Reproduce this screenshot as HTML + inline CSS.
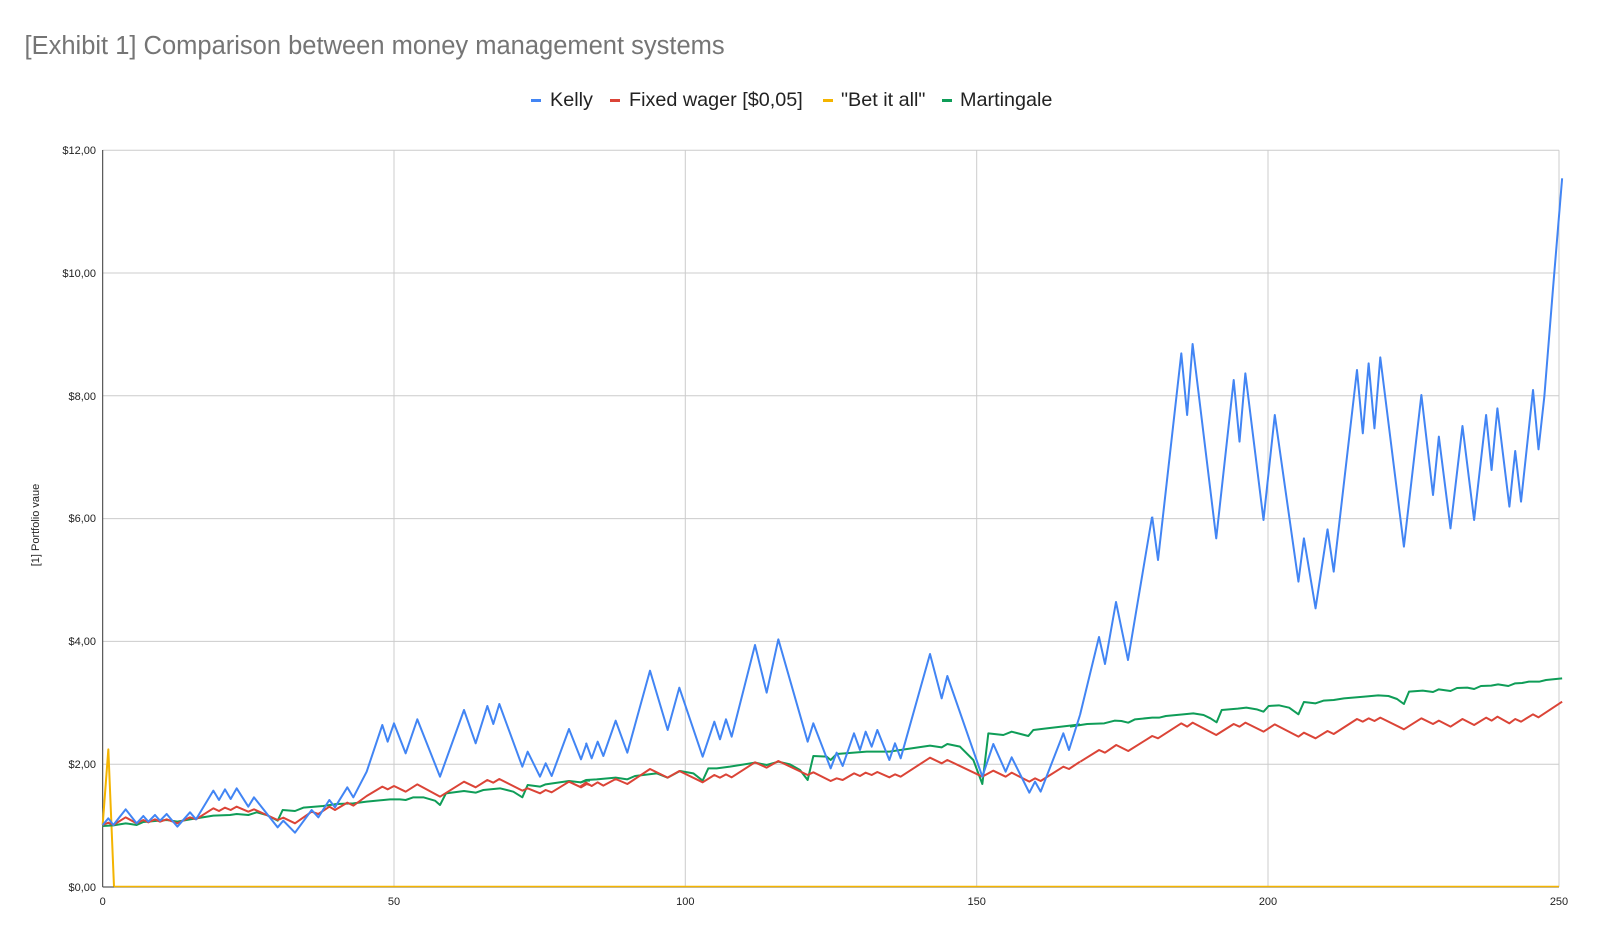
<!DOCTYPE html>
<html><head><meta charset="utf-8"><style>
html,body{margin:0;padding:0;background:#fff;}
svg{display:block;font-family:"Liberation Sans",Arial,sans-serif;}
</style></head><body>
<svg width="1604" height="926" viewBox="0 0 1604 926" xmlns="http://www.w3.org/2000/svg">
<rect width="1604" height="926" fill="#fff"/>
<text x="24.5" y="54" font-size="25.5" fill="#757575">[Exhibit 1] Comparison between money management systems</text>
<g font-size="19.8" fill="#222">
<rect x="531" y="99" width="10" height="3" fill="#4285f4"/><text x="550" y="106">Kelly</text>
<rect x="610" y="99" width="10" height="3" fill="#db4437"/><text x="629" y="106">Fixed wager [$0,05]</text>
<rect x="823" y="99" width="10" height="3" fill="#f4b400"/><text x="841" y="106">"Bet it all"</text>
<rect x="942" y="99" width="10" height="3" fill="#0f9d58"/><text x="960" y="106">Martingale</text>
</g>
<g stroke="#cccccc" stroke-width="1">
<line x1="102.7" y1="764.2" x2="1559" y2="764.2"/><line x1="102.7" y1="641.4" x2="1559" y2="641.4"/>
<line x1="102.7" y1="518.6" x2="1559" y2="518.6"/><line x1="102.7" y1="395.8" x2="1559" y2="395.8"/>
<line x1="102.7" y1="273" x2="1559" y2="273"/><line x1="102.7" y1="150.2" x2="1559" y2="150.2"/>
<line x1="394" y1="150.2" x2="394" y2="887"/><line x1="685.3" y1="150.2" x2="685.3" y2="887"/>
<line x1="976.7" y1="150.2" x2="976.7" y2="887"/><line x1="1268" y1="150.2" x2="1268" y2="887"/>
<line x1="1559" y1="150.2" x2="1559" y2="887"/>
</g>
<line x1="102.7" y1="150" x2="102.7" y2="887" stroke="#333" stroke-width="1"/>
<line x1="102.7" y1="887" x2="1559" y2="887" stroke="#333" stroke-width="1"/>
<g font-size="11" fill="#222" text-anchor="end">
<text x="96" y="891">$0,00</text><text x="96" y="768">$2,00</text><text x="96" y="645">$4,00</text>
<text x="96" y="522">$6,00</text><text x="96" y="400">$8,00</text><text x="96" y="277">$10,00</text><text x="96" y="154">$12,00</text>
</g>
<g font-size="11" fill="#222" text-anchor="middle">
<text x="102.7" y="905">0</text><text x="394" y="905">50</text><text x="685.3" y="905">100</text>
<text x="976.7" y="905">150</text><text x="1268" y="905">200</text><text x="1559" y="905">250</text>
</g>
<text transform="translate(39,525) rotate(-90)" font-size="11" fill="#222" text-anchor="middle">[1] Portfolio vaue</text>

<g fill="none" stroke-width="2" stroke-linejoin="round">
<polyline vector-effect="non-scaling-stroke" stroke="#f4b400" transform="translate(90,580) scale(0.33333)" points="38,735 55,508 72,920"/>
<line x1="114" y1="886.5" x2="1559" y2="886.5" stroke="#f4b400" stroke-width="1.5"/>

<polyline vector-effect="non-scaling-stroke" stroke="#0f9d58" transform="translate(90,580) scale(0.33333)" points="38,738 70,736 107,730 140,735 160,726 230,720 262,725 300,718 370,707 420,705 440,702 475,705 500,697 530,705 563,722 578,690 615,693 640,683 700,678 740,672 790,670 830,665 900,658 930,658 947,660 970,652 1000,652 1035,662 1050,675 1068,640 1122,633 1157,638 1180,630 1230,625 1270,635 1297,652 1313,615 1350,620 1367,613 1437,603 1473,607 1490,602 1500,602"/>
<polyline vector-effect="non-scaling-stroke" stroke="#0f9d58" transform="translate(580,580) scale(0.33333)" points="0,608 18,600 50,598 107,593 142,598 165,588 230,580 263,593 300,573 340,580 368,602 385,565 410,565 450,560 525,548 560,555 595,545 630,553 660,570 683,600 700,528 740,530 752,540 770,522 860,515 928,515 1050,497 1085,502 1102,492 1140,500 1180,540 1207,612 1225,460 1270,465 1295,455 1345,468 1360,450 1400,445 1470,437 1500,433"/>
<polyline vector-effect="non-scaling-stroke" stroke="#0f9d58" transform="translate(1070,620) scale(0.34247,0.33333)" points="0,320 50,312 100,310 130,302 150,303 170,308 190,298 240,293 260,293 280,288 330,283 360,280 390,285 410,295 428,307 443,270 490,266 515,263 545,268 565,275 580,258 610,256 640,263 667,283 683,246 717,250 740,242 770,240 800,235 860,230 900,226 930,228 955,237 975,252 990,215 1030,212 1060,216 1077,208 1111,213 1130,204 1160,203 1180,207 1200,198 1230,197 1250,193 1280,198 1300,190 1320,189 1340,185 1370,185 1390,180 1437,175"/>

<polyline vector-effect="non-scaling-stroke" stroke="#db4437" transform="translate(90,580) scale(0.33333)" points="38,735 55,728 70,735 107,712 140,730 160,720 175,727 195,718 210,725 230,718 262,730 300,712 318,718 370,685 387,693 405,683 422,690 440,680 475,695 492,688 563,720 580,713 615,730 665,695 685,702 718,680 735,690 772,668 790,677 830,648 877,620 893,628 912,618 947,635 982,613 1050,650 1122,605 1157,622 1192,600 1210,608 1228,597 1297,632 1313,625 1350,640 1367,630 1385,637 1437,605 1473,622 1490,612 1500,615"/>
<polyline vector-effect="non-scaling-stroke" stroke="#db4437" transform="translate(580,580) scale(0.33333)" points="0,620 18,608 35,618 53,607 70,617 107,597 142,612 210,567 263,593 298,573 368,607 403,585 420,593 438,583 455,592 525,547 560,563 595,543 683,585 700,577 752,603 770,595 788,600 822,580 840,588 857,578 875,585 892,576 928,592 945,583 962,590 1050,533 1085,550 1102,540 1207,590 1240,572 1277,590 1295,578 1348,605 1365,595 1382,603 1450,560 1467,567 1500,545"/>
<polyline vector-effect="non-scaling-stroke" stroke="#db4437" transform="translate(1070,620) scale(0.34247,0.33333)" points="30,425 85,390 102,398 135,375 170,393 240,348 257,355 325,310 342,320 358,308 427,345 478,312 495,320 512,308 565,335 598,313 667,350 683,338 717,355 752,333 770,342 838,297 855,305 872,295 889,303 906,293 975,328 1026,295 1060,312 1077,302 1111,320 1146,297 1180,315 1215,293 1231,302 1248,290 1283,310 1300,297 1317,305 1352,283 1368,292 1437,245"/>

<polyline vector-effect="non-scaling-stroke" stroke="#4285f4" transform="translate(90,580) scale(0.33333)" points="38,735 55,715 70,735 107,688 140,730 160,708 175,725 195,705 210,722 230,702 262,740 300,697 318,718 370,632 387,660 405,628 422,657 440,625 475,680 492,652 563,742 580,722 615,758 665,690 685,712 718,660 735,682 772,622 790,652 830,575 877,435 893,485 912,430 947,520 982,418 1050,590 1122,390 1157,490 1192,378 1210,432 1228,372 1297,560 1313,515 1350,590 1367,550 1385,588 1437,447 1473,538 1490,490"/>
<polyline vector-effect="non-scaling-stroke" stroke="#4285f4" transform="translate(580,580) scale(0.33333)" points="18,488 35,535 53,485 70,528 107,422 142,518 210,272 263,450 298,323 368,530 403,425 420,478 438,418 455,470 525,195 560,338 595,178 683,485 700,430 752,565 770,518 788,558 822,460 840,510 857,455 875,500 892,450 928,540 945,490 962,535 1050,222 1085,355 1102,288 1207,590 1240,492 1277,575 1295,532 1348,638 1365,605 1382,635 1450,460 1467,510 1500,405"/>
<polyline vector-effect="non-scaling-stroke" stroke="#4285f4" points="1080,715 1099,637 1105,664 1116,602 1128,660 1152,517"/>
<polyline vector-effect="non-scaling-stroke" stroke="#4285f4" transform="translate(1070,140) scale(0.34247,0.33333)" points="240,1130 257,1260 325,640 342,825 358,612 427,1195 478,720 495,905 512,700 565,1140 598,825 667,1325 683,1195 717,1405 752,1168 770,1295 838,690 855,880 872,670 889,865 906,652 975,1220 1026,765 1060,1065 1077,890 1111,1165 1146,858 1180,1140 1215,825 1231,990 1248,805 1283,1100 1300,933 1317,1085 1352,750 1368,928 1385,770 1410,450 1437,115"/>
</g>
</svg>
</body></html>
